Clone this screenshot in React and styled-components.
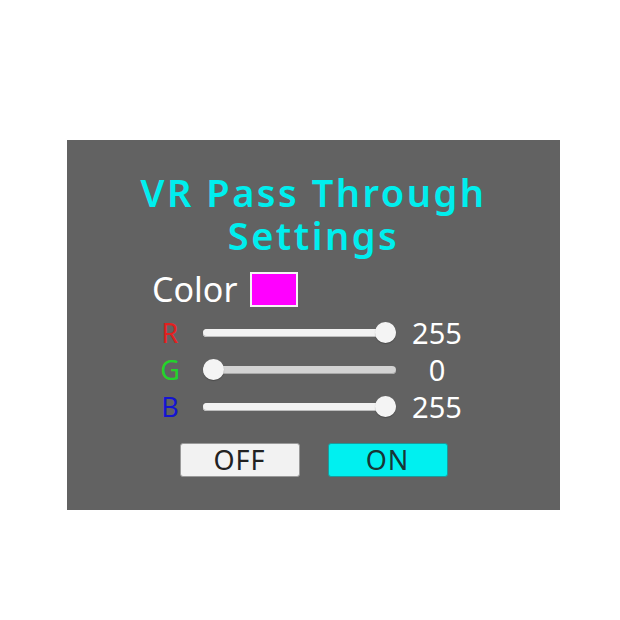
import React from "react";
import styled, { createGlobalStyle } from "styled-components";

const GlobalStyle = createGlobalStyle`
  html, body {
    margin: 0;
    padding: 0;
    background: #ffffff;
  }
  body {
    font-family: "Noto Sans", "Open Sans", sans-serif;
  }
`;

const Page = styled.div`
  padding: 140px 0 0 67px;
`;

const Panel = styled.div`
  box-sizing: border-box;
  width: 493px;
  height: 370px;
  background: #626262;
  padding-top: 31px;
  display: flex;
  flex-direction: column;
  align-items: center;
`;

const Title = styled.h1`
  margin: 0;
  font-size: 38px;
  font-weight: 600;
  line-height: 43px;
  letter-spacing: 2.5px;
  color: #00eeee;
  text-align: center;
`;

const Body = styled.div`
  align-self: flex-start;
  margin-left: 85px;
  margin-top: 12px;
  display: flex;
  flex-direction: column;
`;

const ColorRow = styled.div`
  display: flex;
  align-items: center;
  gap: 13px;
  height: 40px;
  margin-bottom: 5px;
`;

const ColorLabel = styled.span`
  font-size: 34px;
  line-height: 40px;
  color: #ffffff;
`;

const Swatch = styled.div`
  box-sizing: border-box;
  width: 48px;
  height: 35px;
  border: 2px solid #f4f4f4;
  background: ${(p) => p.$color};
`;

const SliderRow = styled.div`
  display: flex;
  align-items: center;
  height: 37px;
  margin-left: 8px;
`;

const Channel = styled.span`
  width: 20px;
  font-size: 27px;
  line-height: 37px;
  text-align: center;
  color: ${(p) => p.$color};
`;

const Track = styled.div`
  position: relative;
  flex: none;
  margin-left: 23px;
  width: 193px;
  height: 8px;
  border-radius: 4px;
  background: #d3d3d3;
  box-shadow: inset 0 -1px 0 #a8a8a8;
`;

const Fill = styled.div`
  height: 100%;
  border-radius: 4px;
  background: #f2f2f2;
  box-shadow: inset 0 -1px 0 #bdbdbd;
`;

const Thumb = styled.div`
  position: absolute;
  top: 50%;
  width: 21px;
  height: 21px;
  margin: -10.5px 0 0 -10.5px;
  border-radius: 50%;
  background: #f4f4f4;
  box-shadow: 0 1px 1px rgba(0, 0, 0, 0.25);
`;

const Value = styled.span`
  margin-left: 16px;
  width: 50px;
  font-size: 29px;
  line-height: 37px;
  text-align: center;
  color: #ffffff;
`;

const Buttons = styled.div`
  display: flex;
  gap: 28px;
  margin-top: 18px;
`;

const Toggle = styled.button`
  box-sizing: border-box;
  width: 120px;
  height: 34px;
  padding: 0;
  border-radius: 3px;
  border: 1px solid ${(p) => (p.$active ? "#1a9a9a" : "#9a9a9a")};
  background: ${(p) => (p.$active ? "#00f0f0" : "#f2f2f2")};
  color: ${(p) => (p.$active ? "#173636" : "#222222")};
  font-family: "Noto Sans", "Open Sans", sans-serif;
  font-size: 27px;
  line-height: 32px;
  letter-spacing: 1px;
`;

const channels = [
  { name: "R", color: "#e3201f", value: 255 },
  { name: "G", color: "#22d42a", value: 0 },
  { name: "B", color: "#1414d2", value: 255 },
];

function Slider({ value }) {
  const min = 10.5;
  const max = 193 - 10.5;
  const x = min + ((max - min) * value) / 255;
  return (
    <Track>
      <Fill style={{ width: `${x}px` }} />
      <Thumb style={{ left: `${x}px` }} />
    </Track>
  );
}

export default function App() {
  return (
    <>
      <GlobalStyle />
      <Page>
        <Panel>
          <Title>
            VR Pass Through
            <br />
            Settings
          </Title>
          <Body>
            <ColorRow>
              <ColorLabel>Color</ColorLabel>
              <Swatch $color="#ff00ff" />
            </ColorRow>
            {channels.map((c) => (
              <SliderRow key={c.name}>
                <Channel $color={c.color}>{c.name}</Channel>
                <Slider value={c.value} />
                <Value>{c.value}</Value>
              </SliderRow>
            ))}
          </Body>
          <Buttons>
            <Toggle>OFF</Toggle>
            <Toggle $active>ON</Toggle>
          </Buttons>
        </Panel>
      </Page>
    </>
  );
}
